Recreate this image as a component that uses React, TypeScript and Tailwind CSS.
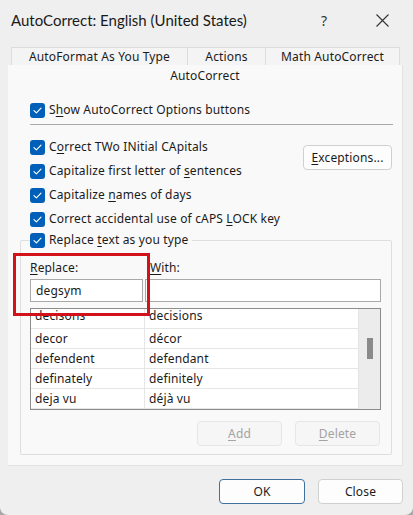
import React from 'react';

const ui = "font-['Noto_Sans',sans-serif] text-[12px] tracking-[0.15px] text-[#1b1b1b]";

// underlined access key letter
function K({ children }: { children: React.ReactNode }) {
  return <span className="underline decoration-1 underline-offset-[2px]">{children}</span>;
}

function CheckRow({ children, className = '' }: { children: React.ReactNode; className?: string }) {
  return (
    <div className={`flex items-center h-[20px] gap-[4px] ${className}`}>
      <span className="w-[15px] h-[15px] rounded-[3px] bg-[#005fb8] flex items-center justify-center shrink-0">
        <svg width="9" height="7" viewBox="0 0 9 7">
          <path d="M1 3.6 L3.4 5.9 L8 1.2" stroke="#fff" strokeWidth="1.2" fill="none" strokeLinecap="round" strokeLinejoin="round" />
        </svg>
      </span>
      <span className="whitespace-nowrap">{children}</span>
    </div>
  );
}

const entries = [
  ['decisons', 'decisions'],
  ['decor', 'décor'],
  ['defendent', 'defendant'],
  ['definately', 'definitely'],
  ['deja vu', 'déjà vu'],
];

export default function App() {
  return (
    <div className={`relative w-[413px] h-[515px] bg-[#a8a8a8] ${ui}`}>
      <div className="h-full bg-[#efefef] rounded-b-[8px] flex flex-col">
        {/* title bar */}
        <div className="h-[40px] flex items-center pl-[11px]">
          <span className="font-['Lato',sans-serif] text-[15px] tracking-normal text-[#1a1a1a] whitespace-nowrap">AutoCorrect: English (United States)</span>
          <span className="ml-auto mr-[13px] w-[46px] text-center text-[14px] text-[#333]">?</span>
          <span className="w-[44px] mr-[9px] flex items-center justify-center">
            <svg width="13" height="13" viewBox="0 0 13 13">
              <path d="M0.5 0.5 L12.5 12.5 M12.5 0.5 L0.5 12.5" stroke="#333" strokeWidth="1.1" />
            </svg>
          </span>
        </div>

        {/* back row of tabs */}
        <div className="mt-[7px] ml-[11px] flex h-[18px]">
          <div className="w-[177px] border border-b-0 border-[#dcdcdc] bg-[#f4f4f4] flex items-center justify-center leading-none">AutoFormat As You Type</div>
          <div className="w-[78px] border-t border-r border-[#dcdcdc] bg-[#f4f4f4] flex items-center justify-center leading-none">Actions</div>
          <div className="w-[134px] border-t border-r border-[#dcdcdc] bg-[#f4f4f4] flex items-center justify-center leading-none">Math AutoCorrect</div>
        </div>

        {/* AutoCorrect page */}
        <div className="ml-[8px] w-[395px] h-[401px] bg-[#f9f9f9] border-r border-b border-[#e2e2e2] flex flex-col">
          <div className="h-[22px] leading-[22px] text-center">AutoCorrect</div>

          <CheckRow className="mt-[13px] ml-[22px]">
            S<K>h</K>ow AutoCorrect Options buttons
          </CheckRow>
          <div className="mt-[4px] ml-[22px] mr-[9px] h-px bg-[#a9a9a9]" />

          <div className="mt-[12px] ml-[22px] mr-[10px] flex">
            <div className="flex flex-col gap-[4px]">
              <CheckRow>C<K>o</K>rrect TWo INitial CApitals</CheckRow>
              <CheckRow>Capitalize first letter of <K>s</K>entences</CheckRow>
              <CheckRow>Capitalize <K>n</K>ames of days</CheckRow>
              <CheckRow>Correct accidental use of cAPS <K>L</K>OCK key</CheckRow>
            </div>
            <button className="ml-auto mt-[8px] w-[89px] h-[25px] rounded-[4px] border border-[#d0d0d0] bg-[#fdfdfd] leading-none">
              <K>E</K>xceptions...
            </button>
          </div>

          {/* replace group */}
          <div className="mt-[11px] ml-[12px] mr-[10px] border border-[#dedede] rounded-[2px] pl-[9px] pr-[10px] pb-[8px] flex flex-col">
            <div className="-mt-[11px] flex">
              <div className="bg-[#f9f9f9] pr-[4px]">
                <CheckRow>Replace <K>t</K>ext as you type</CheckRow>
              </div>
            </div>

            <div className="mt-[10px] flex h-[16px] items-center">
              <span className="w-[120px]"><K>R</K>eplace:</span>
              <span><K>W</K>ith:</span>
            </div>

            <div className="mt-[3px] flex gap-[2px] h-[23px]">
              <div className="w-[113px] border border-[#a9a9a9] bg-white flex items-center pl-[5px]">degsym</div>
              <div className="flex-1 border border-[#a9a9a9] bg-white" />
            </div>

            <div className="mt-[6px] h-[102px] border border-[#8c8c8c] bg-white flex overflow-hidden">
              <div className="flex-1 -mt-[6px]">
                {entries.map(([from, to], i) => (
                  <div key={from} className={`flex border-b border-[#e6e6e6] ${i === 0 ? 'h-[26px]' : 'h-[20px]'}`}>
                    <div className="w-[114px] border-r border-[#e6e6e6] pl-[4px] flex items-center">{from}</div>
                    <div className="flex-1 pl-[4px] flex items-center">{to}</div>
                  </div>
                ))}
              </div>
              <div className="w-[22px] bg-[#ececec] border-l border-[#e4e4e4] flex justify-center">
                <div className="mt-[29px] w-[6px] h-[21px] bg-[#8a8a8a]" />
              </div>
            </div>

            <div className="mt-[11px] flex justify-end gap-[13px] pr-[1px]">
              <button className="w-[85px] h-[25px] rounded-[4px] border border-[#e6e6e6] bg-[#f6f6f6] text-[#a3a3a3] leading-none">
                <K>A</K>dd
              </button>
              <button className="w-[85px] h-[25px] rounded-[4px] border border-[#e6e6e6] bg-[#f6f6f6] text-[#a3a3a3] leading-none">
                <K>D</K>elete
              </button>
            </div>
          </div>
        </div>

        {/* dialog buttons */}
        <div className="mt-[13px] mr-[10px] flex justify-end gap-[13px]">
          <button className="w-[86px] h-[25px] rounded-[4px] border border-[#40709c] bg-[#fdfdfd] leading-none">OK</button>
          <button className="w-[85px] h-[25px] rounded-[4px] border border-[#d0d0d0] bg-[#fdfdfd] leading-none">Close</button>
        </div>
      </div>

      {/* highlight frame around the Replace field */}
      <div className="absolute left-[13px] top-[253px] w-[137px] h-[63px] border-[3px] border-[#d2121b]" />
    </div>
  );
}
